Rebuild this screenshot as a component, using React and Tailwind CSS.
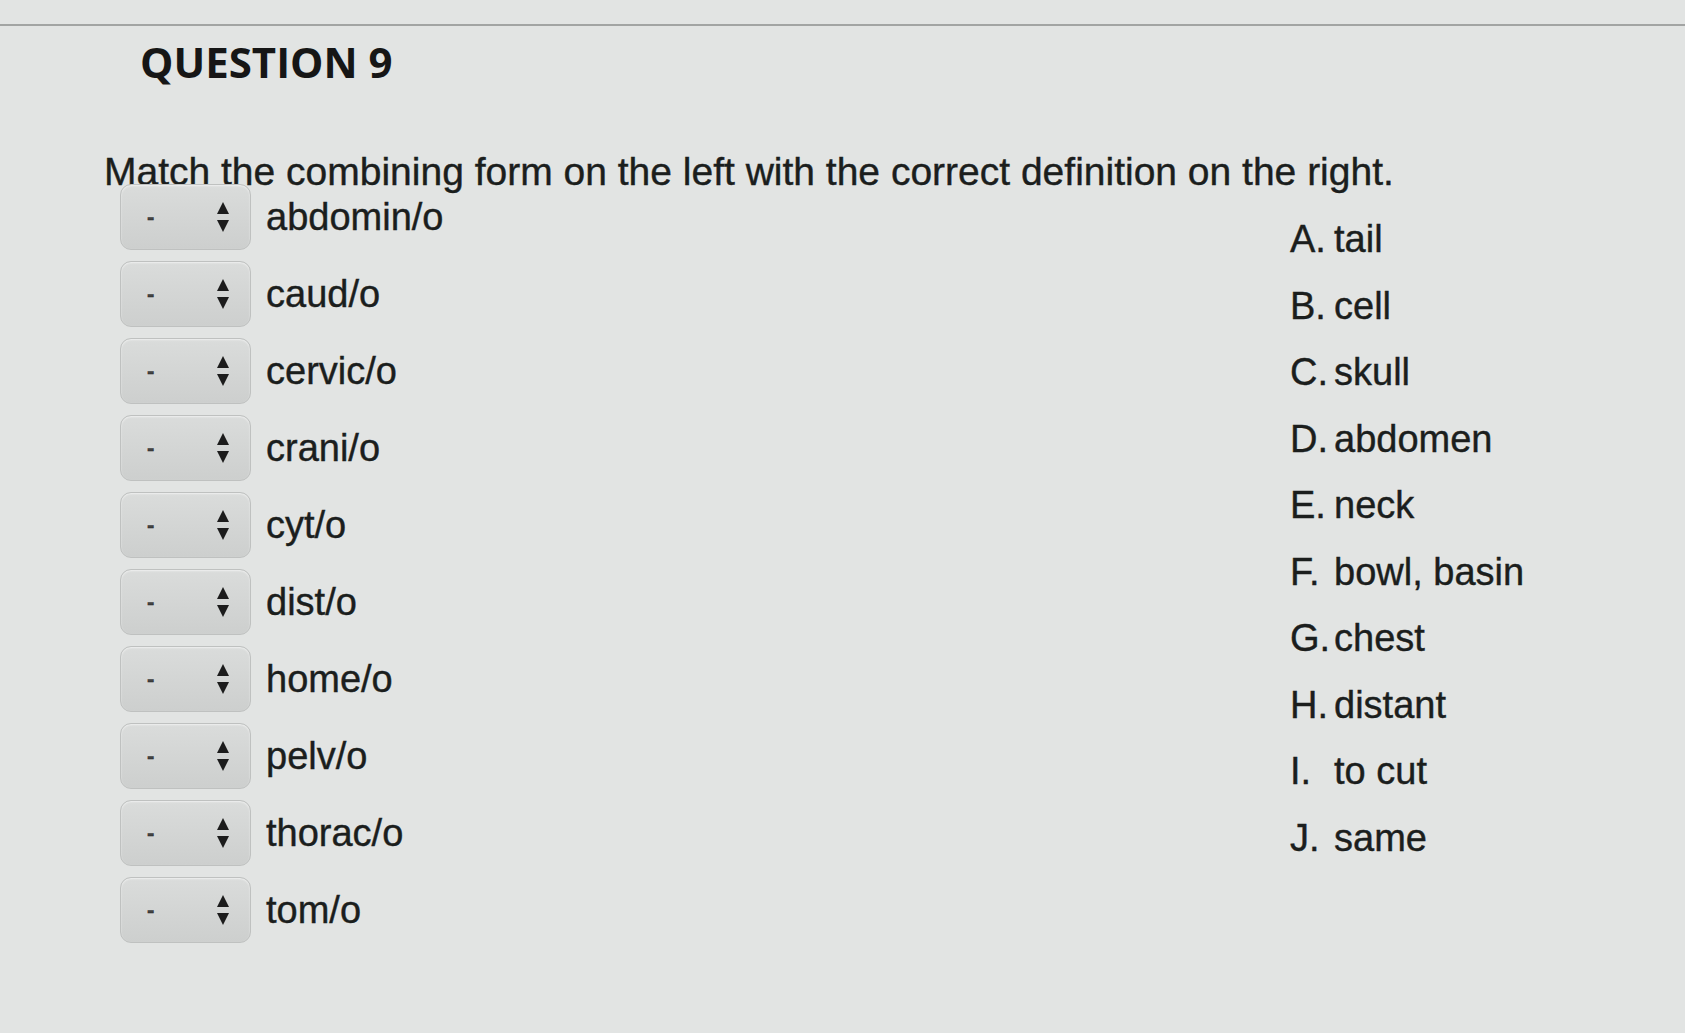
const terms = [
  'abdomin/o',
  'caud/o',
  'cervic/o',
  'crani/o',
  'cyt/o',
  'dist/o',
  'home/o',
  'pelv/o',
  'thorac/o',
  'tom/o',
];

const definitions = [
  ['A.', 'tail'],
  ['B.', 'cell'],
  ['C.', 'skull'],
  ['D.', 'abdomen'],
  ['E.', 'neck'],
  ['F.', 'bowl, basin'],
  ['G.', 'chest'],
  ['H.', 'distant'],
  ['I.', 'to cut'],
  ['J.', 'same'],
];

// native-looking select with the "-" placeholder and up/down chevrons
function MatchSelect() {
  return (
    <div className="w-[131px] h-[66px] shrink-0 rounded-[11px] border border-[#bfc1c0] bg-gradient-to-b from-[#dadcdb] to-[#cdcfce] shadow-[inset_0_1px_2px_rgba(255,255,255,0.6)] flex items-center justify-between pl-[26px] pr-[20px]">
      <span className="text-[22px] font-bold text-[#444] leading-none">-</span>
      <svg width="14" height="32" viewBox="0 0 14 32">
        <path d="M7 1 L13 13 L1 13 Z" fill="#1c1c1c" />
        <path d="M7 31 L13 19 L1 19 Z" fill="#1c1c1c" />
      </svg>
    </div>
  );
}

export default function App() {
  return (
    <div className="min-h-screen bg-[#e2e4e3] text-[#1b1e1d] font-['Liberation_Sans',Arial,sans-serif] [-webkit-text-stroke:0.4px_#1b1e1d]">
      <div className="pt-[24px]">
        <div className="h-[2px] bg-[#a2a4a3]" />
      </div>

      <h1 className="pl-[140px] mt-[11px] font-['Open_Sans',sans-serif] font-bold text-[42px] leading-[50px] text-[#161616] [-webkit-text-stroke:0px]">
        QUESTION 9
      </h1>

      <p className="pl-[104px] mt-[73px] text-[39px] leading-[24px]">
        Match the combining form on the left with the correct definition on the right.
      </p>

      <div className="grid grid-cols-[1290px_1fr]">
        <div className="pl-[120px] flex flex-col gap-[11px]">
          {terms.map((term) => (
            <div key={term} className="flex items-center">
              <MatchSelect />
              <span className="ml-[15px] text-[38px] leading-none">{term}</span>
            </div>
          ))}
        </div>

        <div className="pt-[22px] flex flex-col">
          {definitions.map(([letter, text]) => (
            <div key={letter} className="h-[66.5px] flex items-center text-[38px] leading-none">
              <span className="w-[44px] shrink-0">{letter}</span>
              <span>{text}</span>
            </div>
          ))}
        </div>
      </div>
    </div>
  );
}
